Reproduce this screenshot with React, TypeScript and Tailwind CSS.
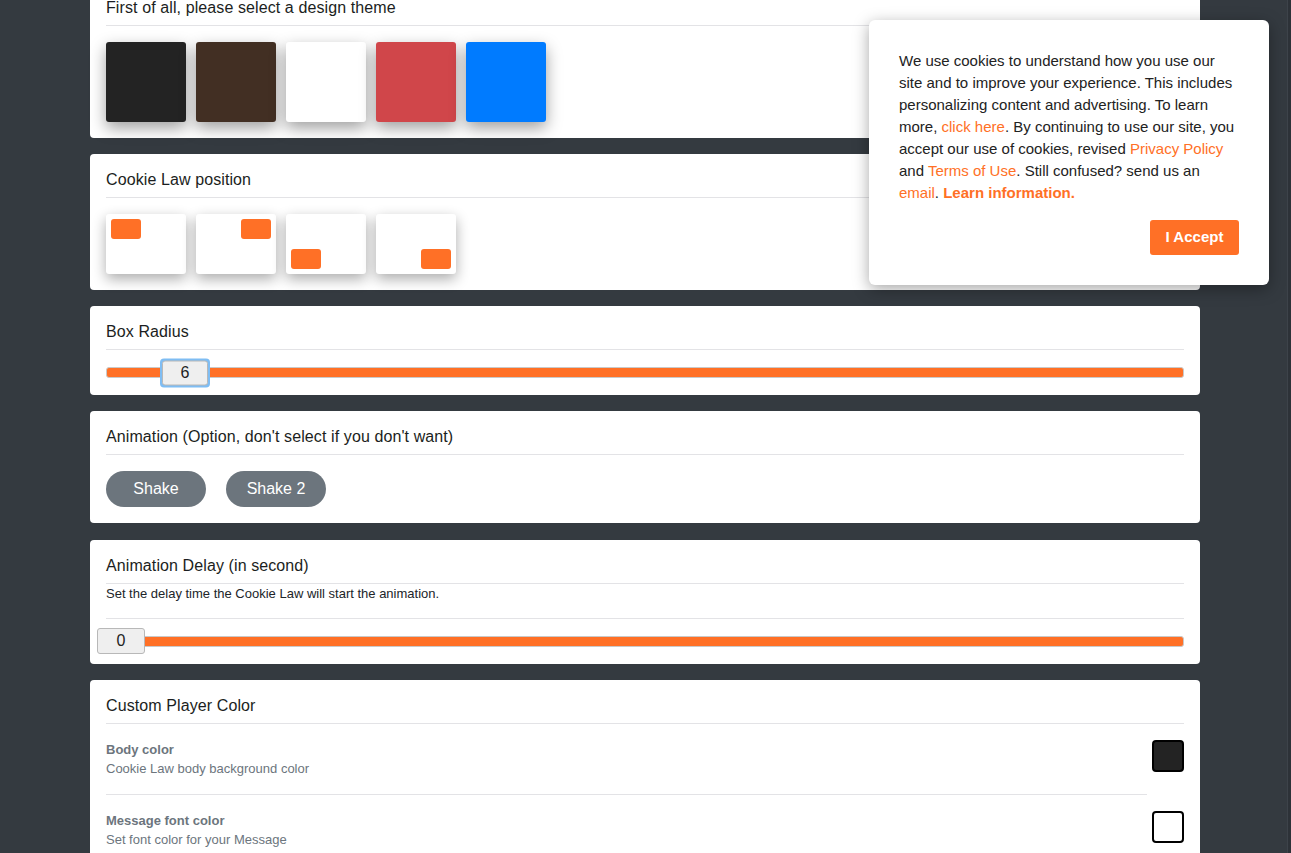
import React from "react";

const ORANGE = "bg-[#ff7026]";

function Card({ title, children, className = "pb-4" }: { title: string; children: React.ReactNode; className?: string }) {
  return (
    <section className={`bg-white rounded-[4px] px-4 pt-4 ${className}`}>
      <h2 className="text-[16px] leading-[19px] text-[#1b1e21] tracking-[0.1px] pb-2 border-b border-[#e3e3e6]">{title}</h2>
      {children}
    </section>
  );
}

function Slider({ value, left, focused }: { value: string; left: string; focused?: boolean }) {
  return (
    <div className="relative h-full flex items-center">
      <div className={`w-full h-[11px] rounded-[3px] border border-[#c9c9c9] ${ORANGE}`} />
      <div
        className={`absolute top-1/2 -translate-y-1/2 ${left} ${
          focused
            ? "w-[50px] h-[29px] p-[2px] rounded-[4px] bg-[#7fbdf3]"
            : "w-[48px] h-[26px]"
        }`}
      >
        <div className="w-full h-full flex items-center justify-center rounded-[3px] border border-[#b8b8b8] bg-[#efefef] text-[16px] text-[#222]">
          {value}
        </div>
      </div>
    </div>
  );
}

function ColorRow({ label, desc, swatch }: { label: string; desc: string; swatch: string }) {
  return (
    <div className="flex items-start">
      <div className="flex-1 pt-4 pb-4 border-b border-[#e3e3e6]">
        <div className="text-[13px] leading-[19px] font-bold text-[#6c757d]">{label}</div>
        <div className="text-[13px] leading-[19px] text-[#6c757d]">{desc}</div>
      </div>
      <div className="pt-4 pl-[5px]">
        <div className={`w-[32px] h-[32px] rounded-[4px] border-2 border-black ${swatch}`} />
      </div>
    </div>
  );
}

export default function App() {
  const themes = ["bg-[#232323]", "bg-[#422f23]", "bg-white", "bg-[#d0464a]", "bg-[#007bff]"];
  const positions = [
    "justify-start items-start",
    "justify-end items-start",
    "justify-start items-end",
    "justify-end items-end",
  ];

  return (
    <div
      className="relative h-[853px] overflow-hidden bg-[#343a40] flex"
      style={{ fontFamily: '"Liberation Sans", Arial, sans-serif' }}
    >
      <main className="flex-1 pl-[90px]">
        <div className="w-[1110px] mt-[-18px] flex flex-col gap-4">
          <Card title="First of all, please select a design theme">
            <div className="mt-4 flex gap-[10px]">
              {themes.map((t) => (
                <div key={t} className={`w-[80px] h-[80px] rounded-[3px] shadow-[0_6px_16px_rgba(0,0,0,0.38)] ${t}`} />
              ))}
            </div>
          </Card>

          <Card title="Cookie Law position">
            <div className="mt-4 flex gap-[10px]">
              {positions.map((p) => (
                <div
                  key={p}
                  className={`w-[80px] h-[60px] p-[5px] rounded-[3px] bg-white flex ${p} shadow-[0_5px_14px_rgba(0,0,0,0.33)]`}
                >
                  <div className={`w-[30px] h-[20px] rounded-[3px] ${ORANGE}`} />
                </div>
              ))}
            </div>
          </Card>

          <Card title="Box Radius" className="pb-2">
            <div className="mt-2 h-[29px]">
              <Slider value="6" left="left-[54px]" focused />
            </div>
          </Card>

          <Card title="Animation (Option, don't select if you don't want)">
            <div className="mt-4 flex gap-5">
              {["Shake", "Shake 2"].map((b) => (
                <button
                  key={b}
                  className="w-[100px] h-[36px] rounded-full bg-[#6c757d] text-white text-[16px]"
                >
                  {b}
                </button>
              ))}
            </div>
          </Card>

          <Card title="Animation Delay (in second)" className="pb-[10px] mt-px">
            <p className="pt-px pb-[15px] text-[13px] leading-[18px] text-[#212529] border-b border-[#e3e3e6]">
              Set the delay time the Cookie Law will start the animation.
            </p>
            <div className="mt-[9px] h-[26px]">
              <Slider value="0" left="left-[-9px]" />
            </div>
          </Card>

          <Card title="Custom Player Color" className="pb-10">
            <ColorRow label="Body color" desc="Cookie Law body background color" swatch="bg-[#232323]" />
            <ColorRow label="Message font color" desc="Set font color for your Message" swatch="bg-white" />
          </Card>
        </div>
      </main>

      <div className="w-[4px] bg-[#2d3238] border-l border-[#3d434a]" />

      <div className="absolute left-[869px] top-[20px] w-[400px] rounded-[6px] bg-white p-[30px] shadow-[0_4px_16px_rgba(0,0,0,0.35)]">
        <div className="text-[15px] leading-[22px] text-[#222] whitespace-nowrap">
          <div>We use cookies to understand how you use our</div>
          <div>site and to improve your experience. This includes</div>
          <div>personalizing content and advertising. To learn</div>
          <div>
            more, <a className="text-[#ff7026]">click here</a>. By continuing to use our site, you
          </div>
          <div>
            accept our use of cookies, revised <a className="text-[#ff7026]">Privacy Policy</a>
          </div>
          <div>
            and <a className="text-[#ff7026]">Terms of Use</a>. Still confused? send us an
          </div>
          <div>
            <a className="text-[#ff7026]">email</a>. <a className="text-[#ff7026] font-bold">Learn information.</a>
          </div>
        </div>
        <div className="mt-4 flex justify-end">
          <button className={`w-[89px] h-[35px] rounded-[3px] ${ORANGE} text-white text-[15px] font-bold`}>
            I Accept
          </button>
        </div>
      </div>
    </div>
  );
}
